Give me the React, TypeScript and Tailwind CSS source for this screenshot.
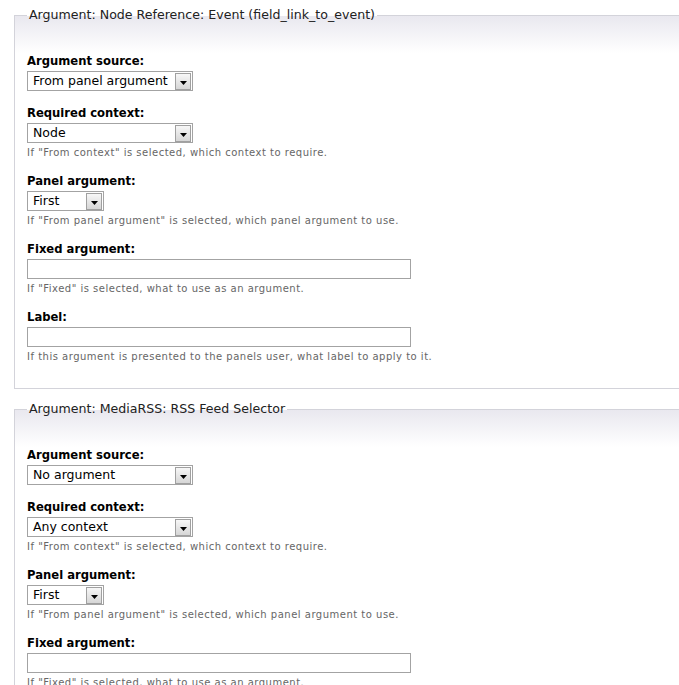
import React from 'react';

const font = { fontFamily: '"DejaVu Sans", Verdana, sans-serif' };

const Arrow: React.FC = () => (
  <span className="flex h-[17px] w-[16px] items-center justify-center border border-[#a0a0a0] bg-linear-to-b from-[#f7f7f7] to-[#d6d6d6]">
    <svg width="7" height="4" viewBox="0 0 7 4" className="mt-[3px]">
      <path d="M0 0h7L3.5 4z" fill="#000" />
    </svg>
  </span>
);

const Select: React.FC<{ value: string; width: string }> = ({ value, width }) => (
  <div className={`flex h-[20px] items-center border border-[#a3a3a3] bg-white pl-[5px] pr-[1px] ${width}`}>
    <span className="flex-1 text-[12.5px] leading-[18px] text-black">{value}</span>
    <Arrow />
  </div>
);

const TextInput: React.FC = () => <div className="h-[20px] w-[384px] border border-[#a3a3a3] bg-white" />;

const Field: React.FC<{ label: string; desc?: string; children: React.ReactNode }> = ({ label, desc, children }) => (
  <div className="mb-[15px]">
    <label className="mb-[2px] block text-[11.6px] font-bold leading-[15px] text-black">{label}</label>
    {children}
    {desc && <div className="mt-[3px] text-[10px] leading-[13px] tracking-[0.5px] text-[#666]">{desc}</div>}
  </div>
);

const Panel: React.FC<{ title: string; children: React.ReactNode; last?: boolean }> = ({ title, children, last }) => (
  <fieldset
    className={`border border-r-0 border-[#d3d3da] bg-linear-to-b from-[#e9e8ef] to-white bg-[length:100%_37px] bg-no-repeat px-[12px] pt-[32px] pb-[10px] ${last ? '' : 'mb-[13px]'}`}
  >
    <legend className="px-[2px] text-[12.6px] leading-[14px] text-[#222]">{title}</legend>
    {children}
  </fieldset>
);

export default function App() {
  return (
    <div className="h-screen overflow-hidden bg-white pt-[8px] pl-[14px]" style={font}>
      <Panel title="Argument: Node Reference: Event (field_link_to_event)">
        <Field label="Argument source:">
          <Select value="From panel argument" width="w-[166px]" />
        </Field>
        <Field label="Required context:" desc={'If "From context" is selected, which context to require.'}>
          <Select value="Node" width="w-[166px]" />
        </Field>
        <Field label="Panel argument:" desc={'If "From panel argument" is selected, which panel argument to use.'}>
          <Select value="First" width="w-[77px]" />
        </Field>
        <Field label="Fixed argument:" desc={'If "Fixed" is selected, what to use as an argument.'}>
          <TextInput />
        </Field>
        <Field label="Label:" desc="If this argument is presented to the panels user, what label to apply to it.">
          <TextInput />
        </Field>
      </Panel>
      <Panel title="Argument: MediaRSS: RSS Feed Selector" last>
        <Field label="Argument source:">
          <Select value="No argument" width="w-[166px]" />
        </Field>
        <Field label="Required context:" desc={'If "From context" is selected, which context to require.'}>
          <Select value="Any context" width="w-[166px]" />
        </Field>
        <Field label="Panel argument:" desc={'If "From panel argument" is selected, which panel argument to use.'}>
          <Select value="First" width="w-[77px]" />
        </Field>
        <Field label="Fixed argument:" desc={'If "Fixed" is selected, what to use as an argument.'}>
          <TextInput />
        </Field>
      </Panel>
    </div>
  );
}
